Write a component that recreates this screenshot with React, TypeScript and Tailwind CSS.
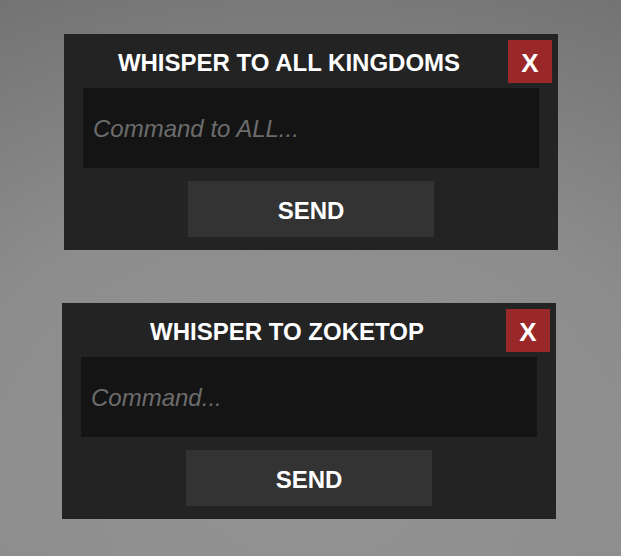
import React from "react";

type WhisperProps = {
  title: string;
  placeholder: string;
  offset: string;
};

function WhisperPanel({ title, placeholder, offset }: WhisperProps) {
  return (
    <div className={`relative w-[494px] h-[216px] bg-[#232323] flex flex-col ${offset}`}>
      <div className="h-[54px] flex items-center justify-center pr-[44px]">
        <h2 className="text-[24px] leading-none font-bold text-white pt-[3px]">{title}</h2>
      </div>
      <button className="absolute top-[6px] right-[6px] w-[44px] h-[43px] bg-[#9a2828] text-white text-[26px] font-bold leading-none flex items-center justify-center pt-[2px]">
        X
      </button>
      <div className="mx-[19px] h-[80px] bg-[#141414] flex items-center">
        <input
          className="w-full h-full bg-transparent px-[10px] pt-[2px] text-[24px] italic text-[#bbbbbb] placeholder:text-[#6c6c6c] outline-none"
          placeholder={placeholder}
        />
      </div>
      <div className="flex justify-center pt-[13px]">
        <button className="w-[246px] h-[56px] bg-[#333333] text-white text-[24px] font-bold leading-none flex items-center justify-center pt-[3px]">
          SEND
        </button>
      </div>
    </div>
  );
}

export default function App() {
  return (
    <div
      className="w-[621px] h-[556px] flex flex-col items-start pt-[34px] gap-[53px] bg-[radial-gradient(ellipse_120%_100%_at_50%_85%,#939393_0%,#8d8d8d_50%,#707070_100%)]"
      style={{ fontFamily: '"Liberation Sans", Arial, sans-serif' }}
    >
      <WhisperPanel title="WHISPER TO ALL KINGDOMS" placeholder="Command to ALL..." offset="ml-[64px]" />
      <WhisperPanel title="WHISPER TO ZOKETOP" placeholder="Command..." offset="ml-[62px]" />
    </div>
  );
}
